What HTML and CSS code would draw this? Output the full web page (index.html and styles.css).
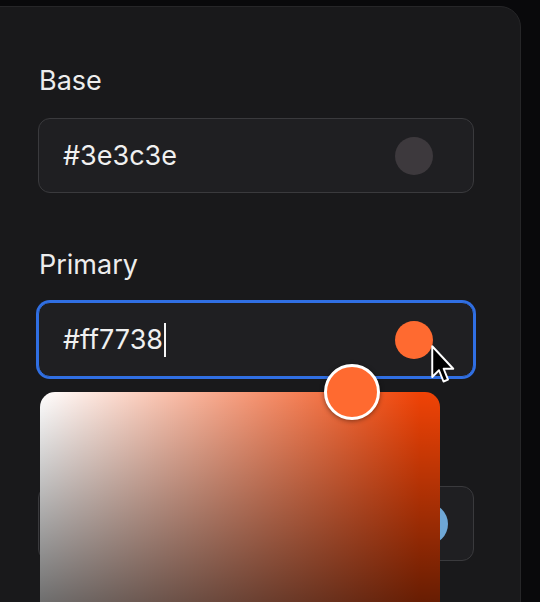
FILE: index.html
```
<!DOCTYPE html>
<html lang="en">
<head>
<meta charset="utf-8">
<title>Theme colors</title>
<link rel="stylesheet" href="styles.css">
</head>
<body>
<div class="card">
  <div class="field">
    <div class="label">Base</div>
    <div class="input">
      <span class="value">#3e3c3e</span>
      <span class="swatch swatch-base"></span>
    </div>
  </div>
  <div class="field field-primary">
    <div class="label">Primary</div>
    <div class="input input-focus">
      <span class="value">#ff7738<span class="caret"></span></span>
      <span class="swatch swatch-primary"></span>
      <svg class="cursor" viewBox="0 0 18 27" width="27" height="40.5" aria-hidden="true">
        <path d="M1.5 1.5 L1.5 22 L6 17.5 L9 25 L12 23.8 L9.1 16.5 L15.5 16.5 Z" fill="#000" stroke="#fff" stroke-width="1.3" stroke-linejoin="round"/>
      </svg>
    </div>
    <div class="picker">
      <div class="handle"></div>
    </div>
  </div>
  <div class="field">
    <div class="label">Neutral</div>
    <div class="input">
      <span class="value">#6fa7d6</span>
      <span class="swatch swatch-sec"></span>
    </div>
  </div>
</div>
</body>
</html>
```
FILE: styles.css
```
html, body {
  margin: 0;
  background: #09090b;
  height: 602px;
  overflow: hidden;
}
body {
  padding-top: 6px;
  box-sizing: border-box;
  font-family: Inter, "Noto Sans", "Liberation Sans", sans-serif;
}
.card {
  margin-left: -30px;
  width: 551px;
  min-height: 720px;
  box-sizing: border-box;
  background: #19191b;
  border: 1px solid #262628;
  border-radius: 21px;
  padding: 54px 0 0 67px;
}
.field {
  position: relative;
}
.field + .field {
  margin-top: 52px;
}
.label {
  font-size: 27px;
  line-height: 40px;
  color: #ededed;
  margin-bottom: 17px;
  padding-left: 1px;
}
.input {
  position: relative;
  width: 436px;
  height: 75px;
  box-sizing: border-box;
  border: 1.5px solid #3a3a3d;
  border-radius: 12px;
  background: #1f1f22;
  display: flex;
  align-items: center;
  padding: 0 40px 0 24px;
}
.input-focus {
  border-color: #306fe3;
  box-shadow: 0 0 0 2px #306fe3;
}
.value {
  flex: 1;
  display: flex;
  align-items: center;
  font-size: 27px;
  color: #f0f0f0;
}
.caret {
  display: inline-block;
  width: 2px;
  height: 34px;
  background: #f5f5f5;
  margin-left: 1px;
}
.swatch {
  width: 38px;
  height: 38px;
  border-radius: 50%;
  flex: none;
}
.swatch-base {
  background: #3d393d;
}
.swatch-primary {
  background: #ff6a30;
}
.swatch-sec {
  width: 42px;
  height: 42px;
  margin-right: -15px;
  background: #6fa7d6;
}
.cursor {
  position: absolute;
  left: 391px;
  top: 41px;
  z-index: 3;
}
.picker {
  position: absolute;
  left: 2px;
  top: calc(100% + 15px);
  width: 400px;
  height: 370px;
  border-radius: 15px;
  background:
    linear-gradient(to bottom, rgba(0,0,0,0), #000),
    linear-gradient(to right, #fff, rgba(255,255,255,0) 95%),
    #f04306;
  z-index: 2;
}
.handle {
  position: absolute;
  left: 312px;
  top: 0;
  width: 50px;
  height: 50px;
  border: 3px solid #fff;
  border-radius: 50%;
  background: #ff6a30;
  transform: translate(-50%, -50%);
  box-shadow: 0 1px 5px rgba(0,0,0,0.45);
}
```
